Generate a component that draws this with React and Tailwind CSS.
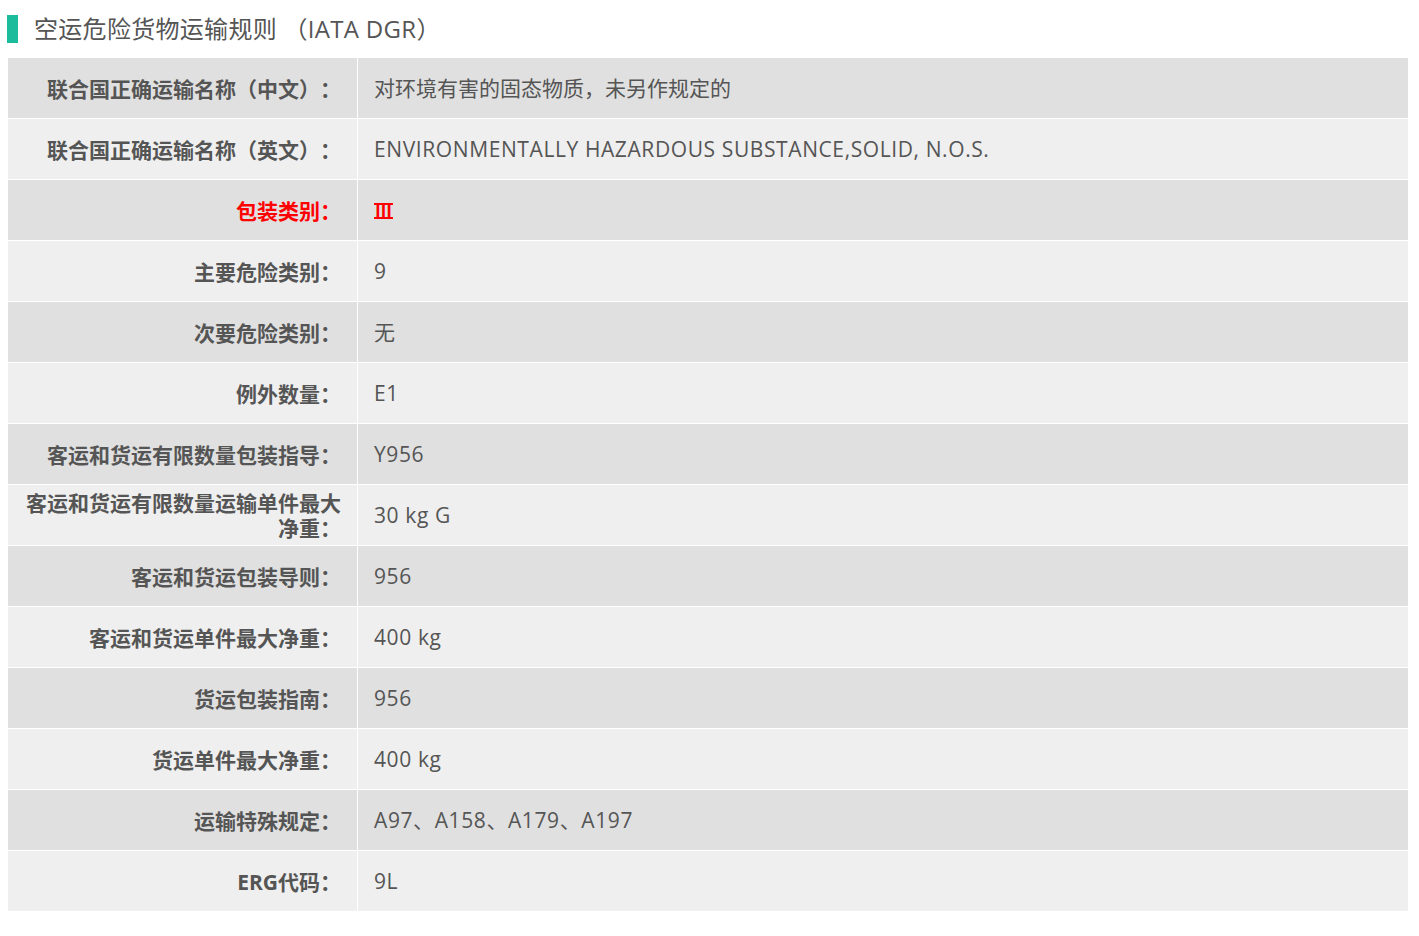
import React from "react";

const rows = [
  { label: "联合国正确运输名称（中文）：", value: "对环境有害的固态物质，未另作规定的" },
  { label: "联合国正确运输名称（英文）：", value: "ENVIRONMENTALLY HAZARDOUS SUBSTANCE,SOLID, N.O.S.", latin: true },
  { label: "包装类别：", value: "Ⅲ", red: true },
  { label: "主要危险类别：", value: "9", latin: true },
  { label: "次要危险类别：", value: "无" },
  { label: "例外数量：", value: "E1", latin: true },
  { label: "客运和货运有限数量包装指导：", value: "Y956", latin: true },
  { label: "客运和货运有限数量运输单件最大净重：", value: "30 kg G", latin: true },
  { label: "客运和货运包装导则：", value: "956", latin: true },
  { label: "客运和货运单件最大净重：", value: "400 kg", latin: true },
  { label: "货运包装指南：", value: "956", latin: true },
  { label: "货运单件最大净重：", value: "400 kg", latin: true },
  { label: "运输特殊规定：", value: "A97、A158、A179、A197", latin: true },
  { label: "ERG代码：", value: "9L", latin: true },
];

const font = { fontFamily: '"Open Sans", "Noto Sans CJK SC", sans-serif' };

// roman numeral with bars above and below, like the SimSun glyph
function Roman({ children }) {
  return (
    <span className="inline-flex items-center justify-center h-[16px] w-[19px] border-y-2 border-[#ff0000] text-[17px] font-bold leading-[12px]">
      {children}
    </span>
  );
}

export default function App() {
  return (
    <div className="min-h-screen bg-white text-[#555] [text-spacing-trim:space-all]" style={font}>
      <div className="flex items-center h-[58px] pl-[7px]">
        <span className="w-[11px] h-[28px] bg-[#1abc9c]" />
        <h2 className="ml-[16px] text-[24px] font-normal text-[#555] leading-none tracking-[0.3px]">
          空运危险货物运输规则 （IATA DGR）
        </h2>
      </div>

      <div className="mx-[8px] w-[1400px] flex flex-col gap-px bg-white">
        {rows.map((r, i) => (
          <div
            key={i}
            className={`flex h-[60px] ${i % 2 === 0 ? "bg-[#e0e0e0]" : "bg-[#efefef]"}`}
          >
            <div
              className={`w-[350px] shrink-0 flex items-center justify-end text-right px-[16px] pt-[2px] text-[21px] font-bold leading-[25px] border-r border-white ${
                r.red ? "text-[#ff0000]" : "text-[#555]"
              }`}
            >
              <span>{r.label}</span>
            </div>
            <div
              className={`flex items-center pl-[16px] pt-[2px] text-[21px] ${
                r.latin ? "tracking-[0.6px]" : ""
              } ${r.red ? "text-[#ff0000]" : "text-[#555]"}`}
            >
              {r.red ? <Roman>{r.value}</Roman> : r.value}
            </div>
          </div>
        ))}
      </div>
    </div>
  );
}
